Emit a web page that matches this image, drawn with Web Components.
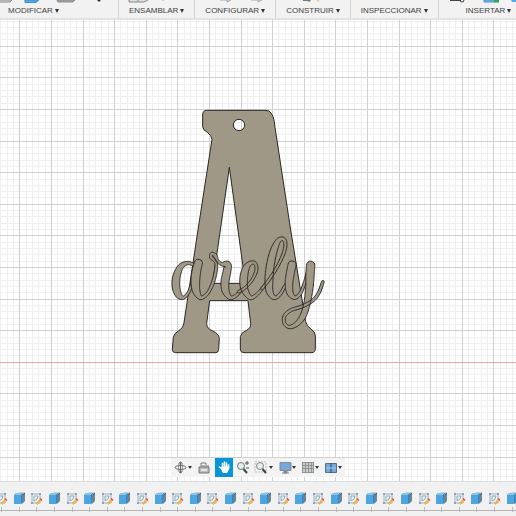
<!DOCTYPE html>
<html lang="es">
<head>
<meta charset="utf-8">
<title>Llavero</title>
<style>
html,body{margin:0;height:100%}
body{font-family:"Liberation Sans",Arial,sans-serif;font-size:8px;color:#404040;background:#f1f1f1;overflow:hidden}
</style>
</head>
<body>
<cad-app></cad-app>
<script>
const define=(name,html,setup)=>customElements.define(name,class extends HTMLElement{
  connectedCallback(){
    if(this.shadowRoot)return;
    const t=document.createElement('template');
    t.innerHTML=html;
    this.attachShadow({mode:'open'}).append(t.content.cloneNode(true));
    if(setup)setup.call(this,this.shadowRoot);
  }
});

define('tool-menu',`<style>
:host{display:flex;flex-direction:column;flex:none;box-sizing:border-box;height:18px;padding:0 10px;border-left:1px solid #d5d5d5;white-space:nowrap}
:host(:first-of-type){border:0;padding-left:8px;width:118px}
:host(:last-of-type){padding-left:27px}
.icons{display:block;height:4px;position:relative}
::slotted(svg){position:absolute;top:0;left:0;overflow:visible}
button{display:flex;align-items:center;gap:2px;border:0;background:none;padding:0;margin:0;height:14px;font:inherit;line-height:14px;color:inherit}
i{width:0;border:2px solid transparent;border-top:4px solid #333;border-bottom:0}
</style><span class="icons"><slot name="icons"></slot></span><button type="button"><slot></slot><i></i></button>`);

define('cad-toolbar',`<style>
:host{display:flex;flex:none;background:#f2f2f2;border-bottom:2px solid #e2e2e2;overflow:hidden}
</style>
<tool-menu><svg slot="icons" width="100" height="4"><path d="M-8 0H4L2 2H-8" fill="#ddd" stroke="#888"/><path d="M17 0H31L28 2.500H17Z" fill="#58a9e5" stroke="#3c8dca"/><path d="M49 0H67L65 2H50Z" fill="#aaa" stroke="#888"/><path d="M89 0h4l-2 2z" fill="#333"/></svg>MODIFICAR</tool-menu>
<tool-menu><svg slot="icons" width="60" height="4"><path d="M0 0V2H15L19 0M9 0V2" fill="#ddd" stroke="#888"/><path d="M34 0v1" stroke="#999"/></svg>ENSAMBLAR</tool-menu>
<tool-menu><svg slot="icons" width="60" height="4"><path d="M15 0h7v2l4-2M46 0h7v2l4-2" fill="#ccc" stroke="#aaa"/></svg>CONFIGURAR</tool-menu>
<tool-menu><svg slot="icons" width="60" height="4"><path d="M17 0h5l2 1" fill="none" stroke="#777" stroke-width="2"/><path d="M24 0v1" stroke="#4a4"/><path d="M32 0v1.500" stroke="#ee9242"/></svg>CONSTRUIR</tool-menu>
<tool-menu>INSPECCIONAR</tool-menu>
<tool-menu><svg slot="icons" width="60" height="4"><path d="M-16 0H-5" stroke="#444" stroke-width="2"/><circle cx="-4" cy="0" r="2" fill="none" stroke="#333"/><path d="M18 0H29V2H18Z" fill="#78b8e8" stroke="#4693cc"/><path d="M28 1h5" stroke="#34a455" stroke-width="3"/><path d="M45 0h10v2H46z" fill="#58a9e5"/></svg>INSERTAR</tool-menu>`);

/* Builds the closed outline of a pen stroke through [x, y, width] points. */
function penStroke(p){
  const left=[],right=[],at=i=>p[Math.max(0,Math.min(p.length-1,i))];
  for(let i=0;i<p.length-1;i++){
    for(let s=0;s<12;s++){
      const t=s/12,a=at(i-1),b=at(i),c=at(i+1),d=at(i+2);
      const f=k=>.5*(2*b[k]+(c[k]-a[k])*t+(2*a[k]-5*b[k]+4*c[k]-d[k])*t*t+(3*b[k]-a[k]-3*c[k]+d[k])*t*t*t);
      const g=k=>(c[k]-a[k])+2*(2*a[k]-5*b[k]+4*c[k]-d[k])*t+3*(3*b[k]-a[k]-3*c[k]+d[k])*t*t;
      const x=f(0),y=f(1),w=f(2)/2,dx=g(0),dy=g(1),n=Math.hypot(dx,dy)||1;
      left.push([x-dy/n*w,y+dx/n*w]);
      right.unshift([x+dy/n*w,y-dx/n*w]);
    }
  }
  const xy=q=>q.map(v=>v.toFixed(1)).join(' ');
  const r0=p[0][2]/2,r1=p[p.length-1][2]/2;
  return 'M'+left.map(xy).join('L')+`A${r1} ${r1} 0 0 0 `+right.map(xy).join('L')+`A${r0} ${r0} 0 0 0 `+xy(left[0])+'Z';
}

define('cad-viewport',`<style>
:host{display:block;position:relative;flex:1;min-height:0;background:#fefefe;overflow:hidden}
svg{display:block;width:100%;height:100%}
nav-bar{position:absolute;left:50%;bottom:4px;transform:translateX(-50%)}
</style>
<svg viewBox="0 20 516 461" preserveAspectRatio="xMidYMid slice" role="img" aria-label="Llavero arely">
<path id="minor" stroke="#efefef" fill="none"/>
<path id="major" stroke="#d0d0d0" fill="none"/>
<path d="M-600 362.500H1200" stroke="#f3a3a3"/>
<g transform="translate(160 220) scale(.33333)" fill="#a09887" stroke="#292723" stroke-width="3" stroke-linejoin="round">
<path fill-rule="evenodd" d="M140-329H318Q337-329 343-295L345-278L392 30L437 305Q440 318 452 326Q466 335 466 348V385Q466 398 456 398H252Q241 398 241 387V350Q243 338 258 332Q273 325 272 310L264 242H149L140 310Q139 325 158 333Q178 342 178 356L176 388Q175 398 168 398H46Q37 398 37 388L40 352Q42 340 55 333Q70 324 72 308L114 30L156-242Q155-254 142-263Q128-271 128-280V-315Q128-329 140-329ZM208-158L158 190H256ZM220-285a17 17 0 1 0 34 0a17 17 0 1 0-34 0Z"/>
<g id="name"></g>
</g></svg><nav-bar></nav-bar>`,function(root){
  let minor='',major='';
  for(let i=-60;i<150;i++){
    const x=Math.round(19.3+i*6.32)+.5,y=Math.round(45.800+i*6.32)+.5,d=`M${x} -600V1200M-600 ${y}H1200`;
    if(i%5)minor+=d;else major+=d;
  }
  root.getElementById('minor').setAttribute('d',minor);
  root.getElementById('major').setAttribute('d',major);
  const strokes=[
    [[102,135,9],[84,129,10],[63,139,16],[50,168,22],[48,200,23],[56,225,19],[70,233,10],[85,218,8],[97,188,8],[105,158,7]],
    [[115,130,24],[109,155,26],[106,185,26],[109,213,22],[122,233,12],[141,222,9],[156,195,9],[166,160,9],[168,128,8],[154,113,9],[156,102,10],[166,107,10],[172,122,9],[185,132,10],[202,134,21],[201,154,23],[195,185,24],[197,213,21],[211,233,12],[229,226,9],[246,207,8]],
    [[236,215,8],[256,203,8],[276,180,8],[289,151,9],[285,130,9],[270,130,12],[257,147,20],[251,178,23],[254,209,20],[271,233,12],[290,224,9],[309,202,8],[326,180,8]],
    [[306,206,8],[330,175,8],[356,133,8],[374,90,9],[374,61,10],[358,59,13],[343,87,20],[332,130,23],[327,177,24],[329,214,20],[343,233,12],[360,223,9],[376,195,8]],
    [[396,135,24],[391,160,24],[387,190,23],[390,218,19],[404,233,11],[421,220,9],[434,188,8],[442,158,8]],
    [[452,136,25],[450,165,25],[448,205,22],[441,250,19],[429,288,18],[410,312,14],[388,321,10],[373,309,9],[374,287,9],[394,270,9],[427,259,9],[459,241,9],[477,217,9],[489,184,8]]
  ];
  root.getElementById('name').innerHTML=strokes.map(s=>`<path d="${penStroke(s)}"/>`).join('');
});

define('nav-button',`<style>
:host{display:flex;flex:none}
button{display:flex;align-items:center;justify-content:space-between;box-sizing:border-box;width:100%;height:19px;padding:0 3px;border:0;background:none}
:host([active]) button{background:#0696d7}
i{display:none;width:0;border:2px solid transparent;border-top:3px solid #333;border-bottom:0}
:host([menu]) i{display:block}
svg,::slotted(svg){flex:none}
</style><button type="button"><slot></slot><i></i></button>`,function(root){
  root.querySelector('button').setAttribute('aria-label',this.getAttribute('label'));
});

define('nav-bar',`<style>
:host{display:flex;width:174px;height:19px;background:#f3f3f3}
nav-button{width:23px}
.first{width:24px}.look{width:20px}.s{width:18px}.fit{width:25px}
</style>
<nav-button menu class="first" label="Órbita"><svg width="13" height="13" viewBox="0 0 13 13" fill="none" stroke="#666"><ellipse cx="6.500" cy="6.500" rx="5.500" ry="2"/><ellipse cx="6.500" cy="6.500" rx="2" ry="5.500" stroke="#888"/><path d="M6.500 1v11M5 2.500L6.500 1 8 2.500M5 10.500L6.500 12 8 10.500"/></svg></nav-button>
<nav-button class="look" label="Mirar a"><svg width="12" height="12" viewBox="0 0 12 12"><path d="M3 3V1h5v2M2 4h9" fill="none" stroke="#777"/><path d="M1 5h10v6H1z" fill="#b8bcc0" stroke="#777"/><path d="M3 7h6v2H3z" fill="#e2e4e6"/></svg></nav-button>
<nav-button active class="s" label="Encuadre"><svg width="13" height="13" viewBox="0 0 13 13" fill="none" stroke="#fff" stroke-linecap="round"><path d="M4.500 7V2.500M6.500 6V1M8.500 6V2M10.500 7V4M4 8L1.500 6" stroke-width="1.600"/><path d="M3.500 7.500L5 11.500H9L11 7V6H4Z" fill="#fff"/></svg></nav-button>
<nav-button class="s" label="Zoom"><svg width="13" height="13" viewBox="0 0 13 13" fill="none"><circle cx="5" cy="5" r="3.500" fill="#e2eef0" stroke="#777"/><path d="M7.500 8l3.500 4" stroke="#444" stroke-width="2"/><path d="M9 2h4M11 0v4M10 7h3" stroke="#555"/></svg></nav-button>
<nav-button menu class="fit" label="Ajustar"><svg width="14" height="13" viewBox="0 0 14 13" fill="none"><path d="M1 1h11v10H1z" stroke="#bbb" stroke-dasharray="2 1"/><circle cx="6" cy="5" r="3.500" fill="#e2eef0" stroke="#888"/><path d="M8.500 8l3.500 4" stroke="#444" stroke-width="2"/></svg></nav-button>
<nav-button menu label="Visualización"><svg width="13" height="13" viewBox="0 0 13 13"><path d="M1 1.500h11v8H1z" fill="#75a7d8" stroke="#858b91"/><path d="M5 10h3v2H5zM3 12h7" fill="#888" stroke="#888"/></svg></nav-button>
<nav-button menu label="Rejilla"><svg width="12" height="13" viewBox="0 0 12 13"><path d="M0 1h12v11H0z" fill="#c8cbce"/><path d="M.5 1v11M3.500 1v11M6.500 1v11M9.500 1v11M11.500 1v11M0 1.500h12M0 4.500h12M0 7.500h12M0 11.500h12" stroke="#858585" stroke-width=".800"/></svg></nav-button>
<nav-button menu label="Ventanas"><svg width="12" height="12" viewBox="0 0 12 12"><path d="M.5 1.500h11v9H.5z" fill="#75a7d8" stroke="#56708a"/><path d="M6 1v10" stroke="#345"/><path d="M1 6h10" stroke="#a9c9e7"/></svg></nav-button>`);

define('timeline-item',`<style>
:host{display:flex;justify-content:center;height:20px}
button{display:flex;flex-direction:column;align-items:center;gap:2px;border:0;background:none;padding:0}
svg{flex:none;display:block}
i{width:1px;height:5px;background:#bdbdbd}
</style><button type="button"></button>`,function(root){
  const solid=this.getAttribute('kind')==='extrude',b=root.querySelector('button');
  b.setAttribute('aria-label',solid?'Extrusión':'Boceto');
  b.innerHTML=(solid?
  `<svg width="13" height="13" viewBox="0 0 13 13"><path d="M3 2L6 .500H12L9 3Z" fill="#a5afb7"/><path d="M9 3L12 .500V9L9 12Z" fill="#73818b"/><path d="M1 3L3 1H9.500V10L8 12H1Z" fill="#4ca5df"/><path d="M1 3L3 1H9.500L8 3Z" fill="#86c6ee"/><path d="M8 3v9l1.500-2V1z" fill="#3287c3"/><path d="M10 3l2-2" stroke="#555"/></svg>`:
  `<svg width="13" height="13" viewBox="0 0 13 13" fill="none"><path d="M2 2H10V11H2Z" stroke="#a9adb1"/><path d="M4 4v5M4 9Q8 8 8 4H4" stroke="#82aeca"/><path d="M1 1h2v2H1zM9 1h2v2H9zM1 10h2v2H1z" fill="#79a9ca"/><path d="M6.500 12L10.500 8" stroke="#edb44d" stroke-width="2.400"/><path d="M10.500 8l1-1" stroke="#f04040" stroke-width="2.600"/></svg>`)+'<i></i>';
});

define('feature-timeline',`<style>
:host{display:block;flex:none;box-sizing:border-box;height:35px;background:#f1f1f1;border-top:1px solid #ddd;overflow:hidden}
.row{display:grid;grid-template-columns:repeat(30,1fr);margin:0 -5px 0 -7px;padding-top:10px;height:18px;border-bottom:1px solid #b5b5b5}
</style><div class="row"></div>`,function(root){
  root.querySelector('.row').innerHTML=Array.from({length:30},(_,i)=>`<timeline-item kind="${i%2?'extrude':'sketch'}"></timeline-item>`).join('');
});

define('cad-app',`<style>:host{display:flex;flex-direction:column;height:100vh}</style>
<cad-toolbar></cad-toolbar><cad-viewport></cad-viewport><feature-timeline></feature-timeline>`);
</script>
</body>
</html>
